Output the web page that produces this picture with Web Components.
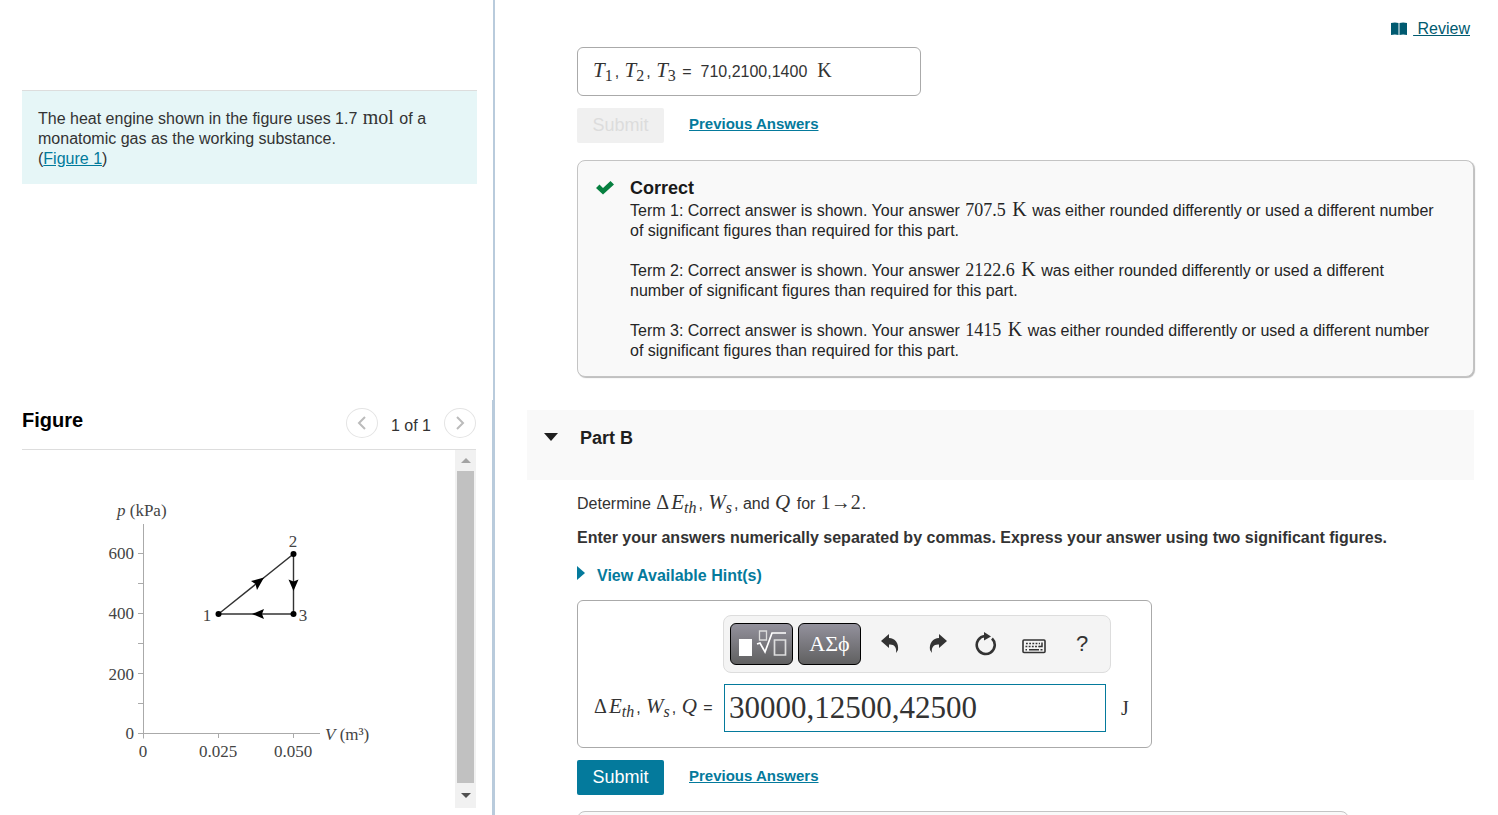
<!DOCTYPE html>
<html lang="en">
<head>
<meta charset="utf-8">
<title>Heat engine - Part B</title>
<style>
  body {
    margin: 0;
    height: 100vh;
    overflow: hidden;
    color: #333;
    background: #fff;
    font: 16px/20px "Liberation Sans", Arial, sans-serif;
  }
</style>
</head>
<body>
<course-page></course-page>

<script>
class MathVar extends HTMLElement {
  constructor() {
    super();
    this.attachShadow({ mode: "open" });
  }

  static get styles() {
    return /* css */`
      :host {
        padding: 0 2px 0 1px;
        font: italic 21px/0 "Liberation Serif", serif;
        white-space: nowrap;
      }
      sub {
        font-size: 16px;
        line-height: 0;
        vertical-align: -4px;
      }
      .upright { font-style: normal; }
    `;
  }

  connectedCallback() {
    const sub = this.getAttribute("sub") || "";
    const upright = /^\d+$/.test(sub) ? "upright" : "";
    this.shadowRoot.innerHTML = /* html */`<style>${MathVar.styles}</style><slot></slot>${sub ? `<sub class="${upright}">${sub}</sub>` : ""}`;
  }
}

class MathNum extends HTMLElement {
  constructor() {
    super();
    this.attachShadow({ mode: "open" });
  }

  static get styles() {
    return /* css */`
      :host {
        padding: 0 1px;
        font: 20px/0 "Liberation Serif", serif;
        white-space: nowrap;
      }
      :host([value]) { font-size: 18px; }
    `;
  }

  connectedCallback() {
    this.shadowRoot.innerHTML = /* html */`<style>${MathNum.styles}</style><slot></slot>`;
  }
}

class ProblemIntro extends HTMLElement {
  constructor() {
    super();
    this.attachShadow({ mode: "open" });
  }

  connectedCallback() {
    this.shadowRoot.innerHTML = /* html */`
    <style>
      :host {
        display: block;
        padding: 18px 16px 15px;
        border-top: 1px solid #ddd;
        background: #e6f6f7;
      }
      p { margin: 0; }
      a { color: #007a9c; }
    </style>
    <p>The heat engine shown in the figure uses 1.7 <math-num>mol</math-num> of a monatomic gas as the working substance.</p>
    <p>(<a href="#figure">Figure 1</a>)</p>`;
  }
}

class PvDiagram extends HTMLElement {
  constructor() {
    super();
    this.attachShadow({ mode: "open" });
  }

  connectedCallback() {
    this.shadowRoot.innerHTML = /* html */`
    <style>
      :host { display: block; }
      svg { display: block; }
      text {
        font: 17px "Liberation Serif", serif;
        fill: #444;
      }
      .mid { text-anchor: middle; }
      .end { text-anchor: end; }
      .it { font-style: italic; }
      .axis { stroke: #aaa; fill: none; }
      .path { stroke: #333; stroke-width: 1.4; fill: none; }
    </style>
    <svg width="300" height="280" viewBox="0 0 300 280" role="img" aria-label="pV diagram">
      <path class="axis" d="M53.5 34V248.5M48 243.5H230M48 63.5h5M48 93.5h5M48 123.5h5M48 153.5h5M48 183.5h5M48 213.5h5M128.5 243v5M203.5 243v5"/>
      <text x="27" y="26"><tspan class="it">p</tspan> (kPa)</text>
      <text class="end" x="44" y="69">600</text>
      <text class="end" x="44" y="129">400</text>
      <text class="end" x="44" y="190">200</text>
      <text class="end" x="44" y="249">0</text>
      <text class="mid" x="53" y="267">0</text>
      <text class="mid" x="128" y="267">0.025</text>
      <text class="mid" x="203" y="267">0.050</text>
      <text x="235" y="250"><tspan class="it">V</tspan> (m³)</text>
      <path class="path" d="M128.5 124L203.5 64V124Z"/>
      <g fill="#000">
        <circle cx="128.5" cy="124" r="3"/>
        <circle cx="203.5" cy="64" r="3"/>
        <circle cx="203.5" cy="124" r="3"/>
        <path d="M174 87.5L161 91L165.5 94L167 100Z"/>
        <path d="M203.5 101L198.5 89.5L203.5 91.5L208.5 89.5Z"/>
        <path d="M162 124L174 119L172 124L174 129Z"/>
      </g>
      <text class="mid" x="117" y="131">1</text>
      <text class="mid" x="203" y="57">2</text>
      <text class="mid" x="213" y="131">3</text>
    </svg>`;
  }
}

class ScrollRail extends HTMLElement {
  constructor() {
    super();
    this.attachShadow({ mode: "open" });
  }

  connectedCallback() {
    this.shadowRoot.innerHTML = /* html */`
    <style>
      :host {
        display: flex;
        flex-direction: column;
        width: 21px;
        background: #f1f1f1;
      }
      button {
        display: grid;
        place-items: center;
        height: 21px;
        padding: 0;
        border: 0;
        background: none;
      }
      button:last-child { height: 25px; }
      .thumb {
        flex: 1;
        margin: 0 2px;
        background: #c1c1c1;
      }
    </style>
    <button aria-label="Scroll up"><svg width="10" height="5"><path d="M0 5L5 0L10 5Z" fill="#a3a3a3"/></svg></button>
    <div class="thumb"></div>
    <button aria-label="Scroll down"><svg width="10" height="5"><path d="M0 0L5 5L10 0Z" fill="#505050"/></svg></button>`;
  }
}

class FigurePanel extends HTMLElement {
  constructor() {
    super();
    this.attachShadow({ mode: "open" });
  }

  connectedCallback() {
    this.shadowRoot.innerHTML = /* html */`
    <style>
      :host {
        display: flex;
        flex-direction: column;
      }
      header {
        display: flex;
        align-items: center;
        height: 49px;
        border-bottom: 1px solid #ddd;
      }
      h2 {
        margin: 0;
        padding-bottom: 10px;
        flex: 1;
        color: #000;
        font-size: 20px;
        line-height: 24px;
      }
      nav {
        display: flex;
        align-items: center;
        gap: 13px;
        padding-bottom: 3px;
      }
      nav span { padding-top: 5px; }
      nav button {
        display: grid;
        place-items: center;
        width: 32px;
        height: 30px;
        padding: 0;
        border: 1px solid #e4e4e4;
        border-radius: 50%;
        background: #fff;
      }
      .body {
        flex: 1;
        display: flex;
        justify-content: space-between;
      }
      pv-diagram { padding: 40px 0 0 68px; }
    </style>
    <header>
      <h2>Figure</h2>
      <nav>
        <button aria-label="Previous figure"><svg width="10" height="14"><path d="M8 1L2 7L8 13" fill="none" stroke="#bbb" stroke-width="2"/></svg></button>
        <span>1 of 1</span>
        <button aria-label="Next figure"><svg width="10" height="14"><path d="M2 1L8 7L2 13" fill="none" stroke="#bbb" stroke-width="2"/></svg></button>
      </nav>
    </header>
    <div class="body">
      <pv-diagram></pv-diagram>
      <scroll-rail></scroll-rail>
    </div>`;
  }
}

class SubmitRow extends HTMLElement {
  constructor() {
    super();
    this.attachShadow({ mode: "open" });
  }

  connectedCallback() {
    this.shadowRoot.innerHTML = /* html */`
    <style>
      :host {
        display: flex;
        align-items: center;
        gap: 25px;
        margin-top: 12px;
      }
      button {
        width: 87px;
        height: 35px;
        padding: 0;
        border: 0;
        border-radius: 2px;
        color: #fff;
        background: #047a9c;
        font: 18px "Liberation Sans", Arial, sans-serif;
      }
      button:disabled {
        color: #dcdcdc;
        background: #f0f0f0;
      }
      a {
        padding-bottom: 3px;
        color: #047a9c;
        font-size: 15px;
        font-weight: bold;
      }
    </style>
    <button ${this.hasAttribute("disabled") ? "disabled" : ""}>Submit</button>
    <a href="#previous">Previous Answers</a>`;
  }
}

class FeedbackBox extends HTMLElement {
  constructor() {
    super();
    this.attachShadow({ mode: "open" });
  }

  connectedCallback() {
    this.shadowRoot.innerHTML = /* html */`
    <style>
      :host {
        display: grid;
        grid-template-columns: 34px 1fr;
        margin-top: 17px;
        padding: 15px 32px 15px 18px;
        border: 1px solid #c4c4c4;
        border-radius: 8px;
        box-shadow: 1px 1px 1px #bbb;
        color: #252525;
        background: #f9f9f9;
      }
      svg { margin-top: 4px; }
      h3 {
        margin: 0;
        color: #1a1a1a;
        font-size: 18px;
        line-height: 24px;
      }
      .terms {
        display: grid;
        gap: 20px;
        padding-top: 1px;
      }
    </style>
    <svg width="18" height="16" viewBox="0 0 18 16"><path d="M0 8L3.5 4.5L7 8L14.5 1L18 4.5L7 14.5Z" fill="#078040"/></svg>
    <div>
      <h3>Correct</h3>
      <div class="terms"><slot></slot></div>
    </div>`;
  }
}

class MathToolbar extends HTMLElement {
  constructor() {
    super();
    this.attachShadow({ mode: "open" });
  }

  static get styles() {
    return /* css */`
      :host {
        display: flex;
        align-items: center;
        height: 56px;
        padding: 0 4px 0 6px;
        border: 1px solid #ddd;
        border-radius: 8px;
        background: #f4f4f4;
      }
      button {
        display: grid;
        place-items: center;
        width: 48px;
        height: 42px;
        padding: 0;
        border: 0;
        color: #333;
        background: none;
        font: 22px "Liberation Sans", Arial, sans-serif;
      }
      .dark {
        width: 63px;
        margin-right: 5px;
        border: 1px solid #000;
        border-radius: 6px;
        color: #fff;
        background: linear-gradient(#93919c, #606060);
        font: 22px "Liberation Serif", serif;
      }
    `;
  }

  connectedCallback() {
    this.shadowRoot.innerHTML = /* html */`
    <style>${MathToolbar.styles}</style>
    <button class="dark" aria-label="Templates">
      <svg width="50" height="30" viewBox="0 0 50 30" fill="none" stroke="#ddd">
        <path d="M2 10H15V27H2Z" fill="#fff" stroke="none"/>
        <path d="M22.5 2h7v9h-7z" stroke-width="1.3"/>
        <path d="M20 15l3-1l5 9L35 4H49" stroke="#fff" stroke-width="1.7"/>
        <path d="M37.5 11h11v15h-11z" stroke-width="1.7"/>
      </svg>
    </button>
    <button class="dark" aria-label="Symbols">ΑΣϕ</button>
    <button aria-label="Undo"><svg width="18" height="20" viewBox="0 0 18 20"><path d="M0 7L8 0V4C14 4 18 9 17 16L15 19C16 13 13 10 8 10.5V14Z" fill="#333"/></svg></button>
    <button aria-label="Redo"><svg width="18" height="20" viewBox="0 0 18 20"><path d="M18 7L10 0V4C4 4 0 9 1 16L3 19C2 13 5 10 10 10.5V14Z" fill="#333"/></svg></button>
    <button aria-label="Reset"><svg width="22" height="24" viewBox="0 0 22 24"><path d="M17 6.5A9 9 0 1 1 10 4" fill="none" stroke="#333" stroke-width="2.6"/><path d="M9 0L16 4.5L9 8.5Z" fill="#333"/></svg></button>
    <button aria-label="Keyboard shortcuts"><svg width="24" height="20" viewBox="0 0 24 20"><rect x="1" y="6" width="22" height="12.5" rx="1" fill="none" stroke="#333" stroke-width="1.6"/><path d="M4 9.5H18M3.5 12.5H18" stroke="#333" stroke-width="1.5" stroke-dasharray="1.8 1.4"/><path d="M20 8.5V12.5H17.5M3.5 15.8H5M18.5 15.8H20.5M7 15.8H17" fill="none" stroke="#333" stroke-width="1.5"/></svg></button>
    <button aria-label="Help">?</button>`;
  }
}

class AnswerForm extends HTMLElement {
  constructor() {
    super();
    this.attachShadow({ mode: "open" });
  }

  connectedCallback() {
    this.shadowRoot.innerHTML = /* html */`
    <style>
      :host {
        display: grid;
        grid-template-columns: 130px 388px auto;
        align-items: center;
        row-gap: 11px;
        max-width: 558px;
        margin-top: 14px;
        padding: 14px 0 15px 15px;
        border: 1px solid #aaa;
        border-radius: 6px;
      }
      math-toolbar { grid-column: 2; }
      label {
        grid-column: 1;
        white-space: nowrap;
      }
      input {
        box-sizing: border-box;
        width: 382px;
        height: 48px;
        margin-left: 1px;
        padding: 0 4px;
        border: 1px solid #047a9c;
        color: #333;
        font: 31px "Liberation Serif", serif;
      }
      .unit { padding-left: 10px; }
    </style>
    <math-toolbar></math-toolbar>
    <label for="answer"><math-num>Δ</math-num><math-var sub="th">E</math-var>, <math-var sub="s">W</math-var>, <math-var>Q</math-var> =</label>
    <input id="answer" type="text" value="30000,12500,42500">
    <math-num class="unit">J</math-num>`;
  }
}

class CoursePage extends HTMLElement {
  constructor() {
    super();
    this.attachShadow({ mode: "open" });
  }

  static get styles() {
    return /* css */`
      :host {
        display: grid;
        grid-template-columns: 495fr 1003fr;
        height: 100%;
      }
      aside {
        display: grid;
        grid-template-rows: 400fr 415fr;
      }
      .top, .bottom {
        padding-left: 22px;
        padding-right: 16px;
        border-right: 2px solid #b9cbdc;
      }
      .top { padding-top: 90px; }
      .bottom {
        display: flex;
        padding-bottom: 7px;
        border-right-width: 3px;
      }
      figure-panel { flex: 1; }

      main {
        min-height: 0;
        overflow: hidden;
        padding: 19px 24px 0 32px;
      }
      .review {
        display: flex;
        justify-content: flex-end;
        align-items: center;
        gap: 4px;
        height: 20px;
        padding-right: 4px;
        color: #005a70;
      }
      .review a {
        color: #005a70;
        white-space: pre;
      }
      .part { margin-left: 50px; }
      .given {
        display: flex;
        align-items: center;
        box-sizing: border-box;
        max-width: 344px;
        height: 49px;
        margin-top: 8px;
        padding: 0 14px;
        border: 1px solid #aaa;
        border-radius: 6px;
        white-space: pre;
      }
      .part-head {
        display: flex;
        gap: 22px;
        box-sizing: border-box;
        height: 70px;
        margin: 33px 0 14px;
        padding: 16px 17px;
        background: #f9f9f9;
      }
      .part-head svg { margin-top: 7px; }
      h2 {
        margin: 0;
        color: #1f1f1f;
        font-size: 18px;
        line-height: 24px;
      }
      p { margin: 0; }
      .part > p { margin-bottom: 14px; }
      .hints {
        display: flex;
        gap: 12px;
        padding: 0;
        border: 0;
        margin-top: 18px;
        color: #047a9c;
        background: none;
        font: bold 16px/20px "Liberation Sans", Arial, sans-serif;
      }
      .next {
        max-width: 770px;
        height: 80px;
        margin-top: 16px;
        border: 1px solid #c4c4c4;
        border-radius: 8px;
        background: #f9f9f9;
      }
    `;
  }

  connectedCallback() {
    this.render();
  }

  render() {
    this.shadowRoot.innerHTML = /* html */`
    <style>${CoursePage.styles}</style>
    <aside>
      <div class="top"><problem-intro></problem-intro></div>
      <div class="bottom"><figure-panel id="figure"></figure-panel></div>
    </aside>
    <main>
      <div class="review">
        <svg width="18" height="14" viewBox="0 0 18 14"><path d="M0 1Q4 0 7.5 1V13Q4 12 0 13ZM8.500 1Q12 0 16 1V13Q12 12 8.500 13Z" fill="#005a70"/></svg>
        <a href="#review"> Review</a>
      </div>
      <div class="part">
        <div class="given"><span><math-var sub="1">T</math-var>, <math-var sub="2">T</math-var>, <math-var sub="3">T</math-var> =  710,2100,1400  <math-num>K</math-num></span></div>
        <submit-row disabled></submit-row>
        <feedback-box>
          <p>Term 1: Correct answer is shown. Your answer <math-num value>707.5</math-num> <math-num>K</math-num> was either rounded differently or used a different number of significant figures than required for this part.</p>
          <p>Term 2: Correct answer is shown. Your answer <math-num value>2122.6</math-num> <math-num>K</math-num> was either rounded differently or used a different number of significant figures than required for this part.</p>
          <p>Term 3: Correct answer is shown. Your answer <math-num value>1415</math-num> <math-num>K</math-num> was either rounded differently or used a different number of significant figures than required for this part.</p>
        </feedback-box>
      </div>
      <div class="part-head">
        <svg width="14" height="8"><path d="M0 0H14L7 8Z" fill="#1f1f1f"/></svg>
        <h2>Part B</h2>
      </div>
      <div class="part">
        <p>Determine <math-num>Δ</math-num><math-var sub="th">E</math-var>, <math-var sub="s">W</math-var>, and <math-var>Q</math-var> for <math-num>1→2</math-num>.</p>
        <p><strong>Enter your answers numerically separated by commas. Express your answer using two significant figures.</strong></p>
        <button class="hints"><svg width="8" height="14"><path d="M0 0L8 7L0 14Z" fill="#047a9c"/></svg>View Available Hint(s)</button>
        <answer-form></answer-form>
        <submit-row></submit-row>
        <div class="next"></div>
      </div>
    </main>`;
  }
}

customElements.define("math-var", MathVar);
customElements.define("math-num", MathNum);
customElements.define("problem-intro", ProblemIntro);
customElements.define("pv-diagram", PvDiagram);
customElements.define("scroll-rail", ScrollRail);
customElements.define("figure-panel", FigurePanel);
customElements.define("submit-row", SubmitRow);
customElements.define("feedback-box", FeedbackBox);
customElements.define("math-toolbar", MathToolbar);
customElements.define("answer-form", AnswerForm);
customElements.define("course-page", CoursePage);
</script>
</body>
</html>
